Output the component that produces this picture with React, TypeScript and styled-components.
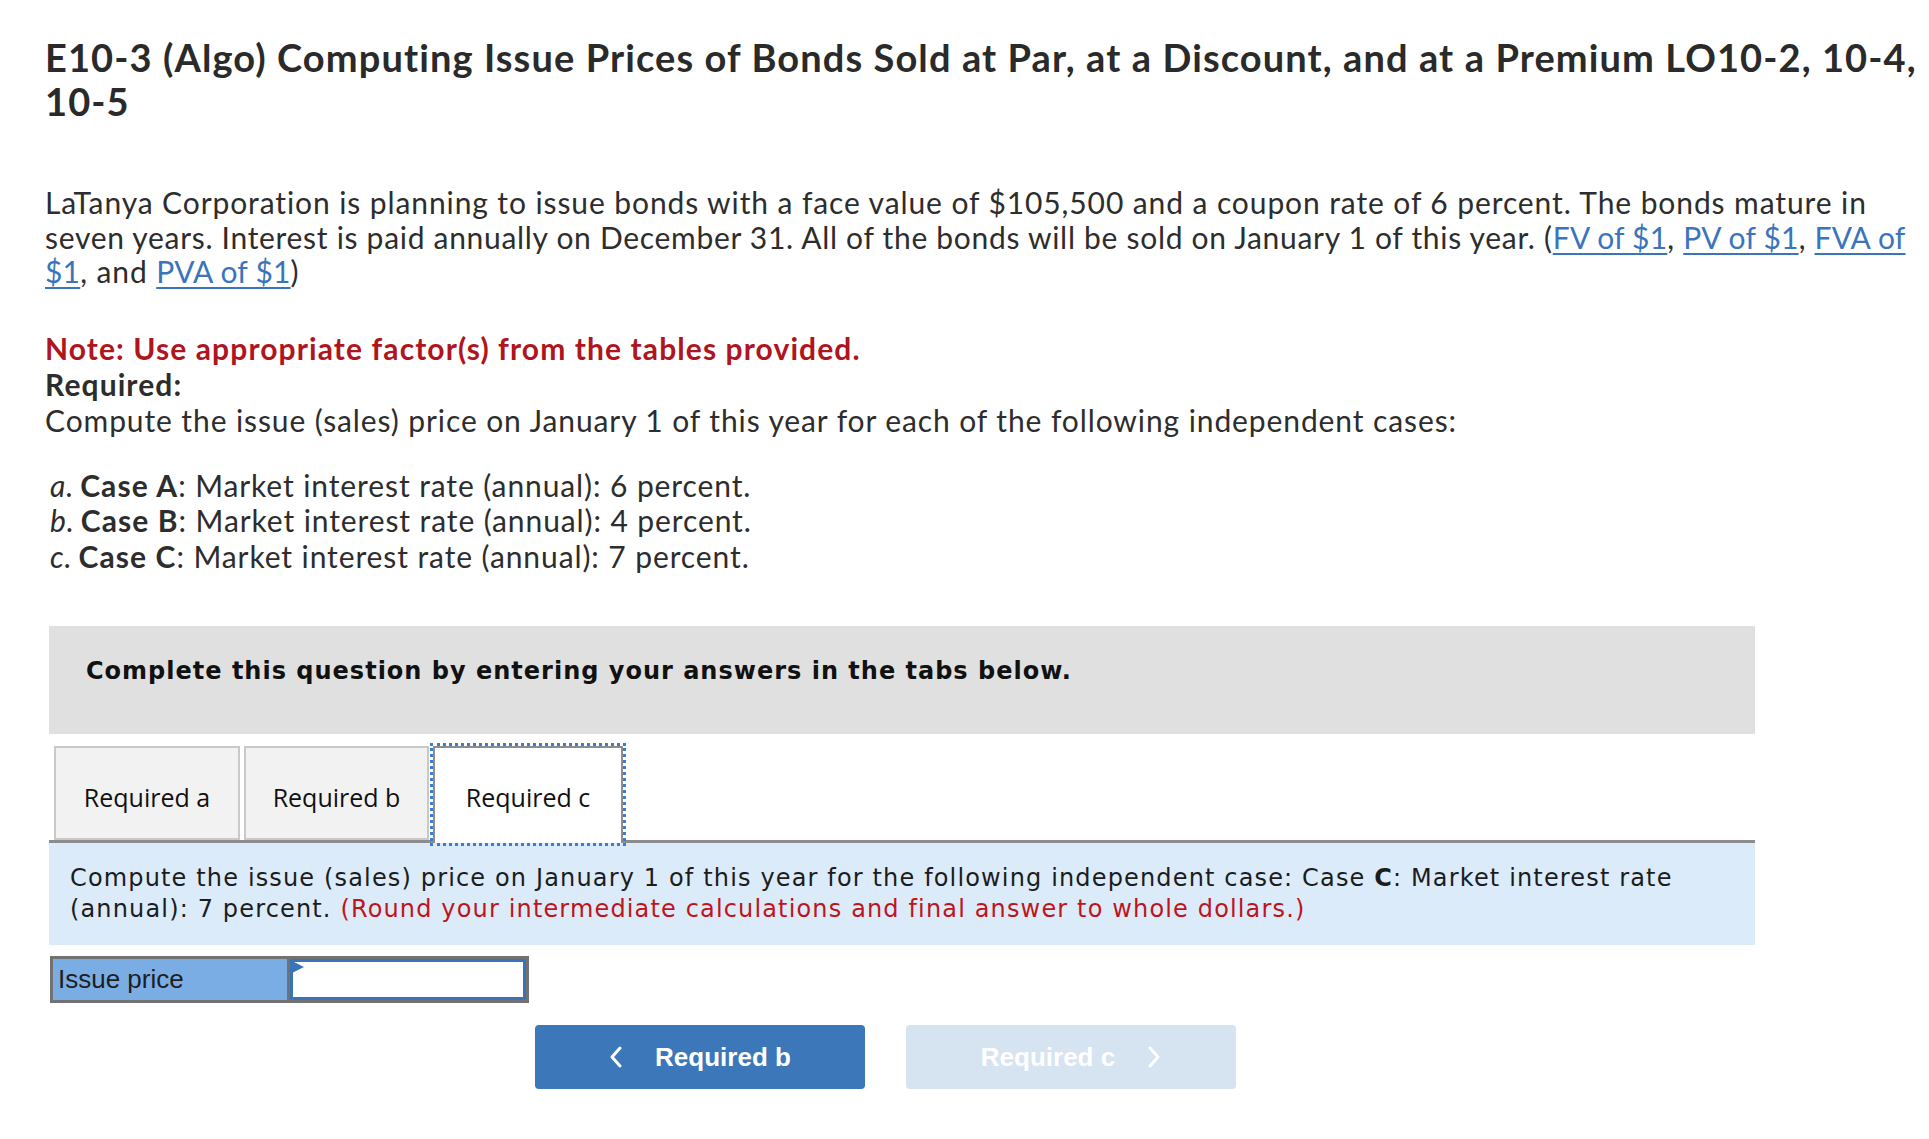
import React from 'react';
import styled, { createGlobalStyle } from 'styled-components';

const GlobalStyle = createGlobalStyle`
  html, body {
    margin: 0;
    padding: 0;
    background: #ffffff;
    overflow-x: hidden;
  }
`;

const Page = styled.div`
  padding: 36px 0 40px 45px;
  font-family: Lato, 'Open Sans', sans-serif;
  color: #2d2d2d;
`;

const Title = styled.h1`
  margin: 0;
  font: 700 38px/43.5px Lato, sans-serif;
  letter-spacing: 1.1px;
  color: #2a2a2a;
  white-space: nowrap;
`;

const Intro = styled.p`
  margin: 62px 0 0;
  font-size: 30px;
  line-height: 34.5px;
  letter-spacing: 0.9px;
  white-space: nowrap;
`;

const TightLine = styled.span`
  letter-spacing: 0.7px;
`;

const Link = styled.a`
  color: #3a74bb;
  letter-spacing: 0.2px;
  text-decoration: underline;
  text-decoration-thickness: 2px;
  text-underline-offset: 4px;
  cursor: pointer;
`;

const Block = styled.div`
  margin-top: 41px;
  font-size: 30px;
  line-height: 36px;
  letter-spacing: 0.9px;
  white-space: nowrap;
`;

const Note = styled.div`
  color: #b0141c;
  font-weight: 700;
  letter-spacing: 1.1px;
`;

const Strong = styled.div`
  font-weight: 700;
  letter-spacing: 1.1px;
`;

const Cases = styled.ul`
  list-style: none;
  margin: 30px 0 0;
  padding: 0 0 0 5px;
  font-size: 30px;
  line-height: 35.5px;
  letter-spacing: 0.9px;
`;

const Letter = styled.i`
  font-style: italic;
  margin-right: 6px;
`;

const CaseName = styled.b`
  font-weight: 700;
  letter-spacing: 1.1px;
`;

const Widget = styled.section`
  margin: 52px 0 0 4px;
  width: 1706px;
`;

const Banner = styled.div`
  background: #e0e0e0;
  padding: 30px 37px 48px;
  font: 700 24px/30px 'DejaVu Sans', Verdana, sans-serif;
  letter-spacing: 1px;
  color: #111;
`;

const TabRow = styled.div`
  display: flex;
  align-items: flex-end;
  gap: 4px;
  margin-top: 12px;
  padding-left: 5px;
  border-bottom: 3px solid #8c8c8c;
  height: 94px;
`;

const Tab = styled.button<{ $active?: boolean; $w: number }>`
  box-sizing: border-box;
  width: ${p => p.$w}px;
  height: ${p => (p.$active ? 97 : 94)}px;
  margin-bottom: ${p => (p.$active ? -3 : 0)}px;
  padding: ${p => (p.$active ? 3 : 8)}px 0 0;
  background: ${p => (p.$active ? '#ffffff' : '#f2f2f2')};
  border: 2px solid ${p => (p.$active ? '#8d8d8d' : '#c9c9c9')};
  border-bottom: ${p => (p.$active ? 'none' : '2px solid #c9c9c9')};
  outline: ${p => (p.$active ? '3px dotted #3b7dd0' : 'none')};
  outline-offset: 0;
  font: 400 25px 'Open Sans', 'Segoe UI', sans-serif;
  color: #111;
  cursor: pointer;
`;

const Instruction = styled.div`
  background: #dbebf9;
  padding: 20px 21px 20px;
  font: 400 24px/31px 'DejaVu Sans', Verdana, sans-serif;
  letter-spacing: 1.15px;
  color: #1c1c1c;
  white-space: nowrap;
`;

const Red = styled.span`
  color: #c0141c;
`;

const AnswerRow = styled.div`
  display: flex;
  margin-top: 11px;
  margin-left: 1px;
  width: 479px;
  height: 47px;
  box-sizing: border-box;
  border: 3px solid #727272;
`;

const AnswerLabel = styled.div`
  box-sizing: border-box;
  width: 237px;
  background: #7aade4;
  border-right: 3px solid #727272;
  padding-left: 5px;
  display: flex;
  align-items: center;
  font: 400 26px 'Liberation Sans', Arial, sans-serif;
  color: #1e1e1e;
`;

const AnswerCell = styled.div`
  position: relative;
  flex: 1;
  background: #fff;
  border: 3px solid #3a74b8;
`;

const Flag = styled.span`
  position: absolute;
  z-index: 1;
  top: -2px;
  left: -3px;
  width: 0;
  height: 0;
  border-top: 7px solid transparent;
  border-bottom: 7px solid transparent;
  border-left: 14px solid #3a74b8;
`;

const Input = styled.input`
  width: 100%;
  height: 100%;
  box-sizing: border-box;
  border: none;
  outline: none;
  background: transparent;
  font: 400 22px 'Liberation Sans', Arial, sans-serif;
`;

const NavRow = styled.div`
  display: flex;
  gap: 41px;
  margin: 22px 0 0 486px;
`;

const NavButton = styled.button<{ $disabled?: boolean }>`
  width: 330px;
  height: 64px;
  border: none;
  border-radius: 4px;
  background: ${p => (p.$disabled ? '#d6e3f1' : '#3b77b9')};
  color: #ffffff;
  display: flex;
  align-items: center;
  justify-content: center;
  gap: 32px;
  font: 700 26px 'Liberation Sans', Arial, sans-serif;
  cursor: ${p => (p.$disabled ? 'default' : 'pointer')};
`;

const Chevron = ({ dir }: { dir: 'left' | 'right' }) => (
  <svg width="14" height="22" viewBox="0 0 14 22" fill="none">
    <polyline
      points={dir === 'left' ? '11,2 3,11 11,20' : '3,2 11,11 3,20'}
      stroke="#ffffff"
      strokeWidth="3"
      strokeLinecap="round"
      strokeLinejoin="round"
    />
  </svg>
);

const cases = [
  { letter: 'a.', name: 'Case A', rate: 6 },
  { letter: 'b.', name: 'Case B', rate: 4 },
  { letter: 'c.', name: 'Case C', rate: 7 },
];

const tabs = [
  { label: 'Required a', w: 186 },
  { label: 'Required b', w: 185 },
  { label: 'Required c', w: 190 },
];

export default function App() {
  return (
    <>
      <GlobalStyle />
      <Page>
        <Title>
          E10-3 (Algo) Computing Issue Prices of Bonds Sold at Par, at a Discount, and at a Premium LO10-2, 10-4,
          <br />
          10-5
        </Title>

        <Intro>
          LaTanya Corporation is planning to issue bonds with a face value of $105,500 and a coupon rate of 6 percent. The bonds mature in
          <br />
          <TightLine>
            seven years. Interest is paid annually on December 31. All of the bonds will be sold on January 1 of this year. (
            <Link>FV of $1</Link>, <Link>PV of $1</Link>, <Link>FVA of</Link>
          </TightLine>
          <br />
          <Link>$1</Link>, and <Link>PVA of $1</Link>)
        </Intro>

        <Block>
          <Note>Note: Use appropriate factor(s) from the tables provided.</Note>
          <Strong>Required:</Strong>
          <div>Compute the issue (sales) price on January 1 of this year for each of the following independent cases:</div>
        </Block>

        <Cases>
          {cases.map(c => (
            <li key={c.letter}>
              <Letter>{c.letter}</Letter>
              <CaseName>{c.name}</CaseName>: Market interest rate (annual): {c.rate} percent.
            </li>
          ))}
        </Cases>

        <Widget>
          <Banner>Complete this question by entering your answers in the tabs below.</Banner>

          <TabRow>
            {tabs.map((t, i) => (
              <Tab key={t.label} $w={t.w} $active={i === 2}>
                {t.label}
              </Tab>
            ))}
          </TabRow>

          <Instruction>
            Compute the issue (sales) price on January 1 of this year for the following independent case: Case <b>C</b>: Market interest rate
            <br />
            (annual): 7 percent. <Red>(Round your intermediate calculations and final answer to whole dollars.)</Red>
          </Instruction>

          <AnswerRow>
            <AnswerLabel>Issue price</AnswerLabel>
            <AnswerCell>
              <Flag />
              <Input aria-label="Issue price" />
            </AnswerCell>
          </AnswerRow>

          <NavRow>
            <NavButton>
              <Chevron dir="left" />
              <span>Required b</span>
            </NavButton>
            <NavButton $disabled>
              <span>Required c</span>
              <Chevron dir="right" />
            </NavButton>
          </NavRow>
        </Widget>
      </Page>
    </>
  );
}
